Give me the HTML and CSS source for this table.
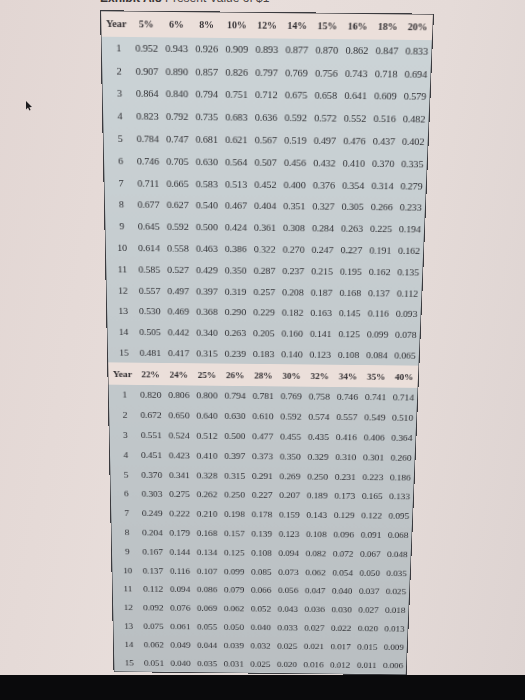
FILE: index.html
```html
<!DOCTYPE html>
<html>
<head>
<meta charset="utf-8">
<link rel="stylesheet" href="styles.css">
</head>
<body>
<div class="desk">
  <svg class="cursor" width="7" height="10" viewBox="0 0 7 10"><path d="M0 0 L0 8.5 L2 6.6 L3.4 9.6 L4.6 9 L3.3 6.2 L6 6 Z" fill="#1c1c1e"/></svg>
  <div class="sheet">
    <div class="title"><b>Exhibit A.8</b> Present Value of $1</div>
    <table class="pv">
      <colgroup><col class="c-year"><col span="10" class="c-val"></colgroup>
      <tbody>
        <tr class="hd"><th>Year</th><th>5%</th><th>6%</th><th>8%</th><th>10%</th><th>12%</th><th>14%</th><th>15%</th><th>16%</th><th>18%</th><th>20%</th></tr>
        <tr><td>1</td><td>0.952</td><td>0.943</td><td>0.926</td><td>0.909</td><td>0.893</td><td>0.877</td><td>0.870</td><td>0.862</td><td>0.847</td><td>0.833</td></tr>
        <tr><td>2</td><td>0.907</td><td>0.890</td><td>0.857</td><td>0.826</td><td>0.797</td><td>0.769</td><td>0.756</td><td>0.743</td><td>0.718</td><td>0.694</td></tr>
        <tr><td>3</td><td>0.864</td><td>0.840</td><td>0.794</td><td>0.751</td><td>0.712</td><td>0.675</td><td>0.658</td><td>0.641</td><td>0.609</td><td>0.579</td></tr>
        <tr><td>4</td><td>0.823</td><td>0.792</td><td>0.735</td><td>0.683</td><td>0.636</td><td>0.592</td><td>0.572</td><td>0.552</td><td>0.516</td><td>0.482</td></tr>
        <tr><td>5</td><td>0.784</td><td>0.747</td><td>0.681</td><td>0.621</td><td>0.567</td><td>0.519</td><td>0.497</td><td>0.476</td><td>0.437</td><td>0.402</td></tr>
        <tr><td>6</td><td>0.746</td><td>0.705</td><td>0.630</td><td>0.564</td><td>0.507</td><td>0.456</td><td>0.432</td><td>0.410</td><td>0.370</td><td>0.335</td></tr>
        <tr><td>7</td><td>0.711</td><td>0.665</td><td>0.583</td><td>0.513</td><td>0.452</td><td>0.400</td><td>0.376</td><td>0.354</td><td>0.314</td><td>0.279</td></tr>
        <tr><td>8</td><td>0.677</td><td>0.627</td><td>0.540</td><td>0.467</td><td>0.404</td><td>0.351</td><td>0.327</td><td>0.305</td><td>0.266</td><td>0.233</td></tr>
        <tr><td>9</td><td>0.645</td><td>0.592</td><td>0.500</td><td>0.424</td><td>0.361</td><td>0.308</td><td>0.284</td><td>0.263</td><td>0.225</td><td>0.194</td></tr>
        <tr><td>10</td><td>0.614</td><td>0.558</td><td>0.463</td><td>0.386</td><td>0.322</td><td>0.270</td><td>0.247</td><td>0.227</td><td>0.191</td><td>0.162</td></tr>
        <tr><td>11</td><td>0.585</td><td>0.527</td><td>0.429</td><td>0.350</td><td>0.287</td><td>0.237</td><td>0.215</td><td>0.195</td><td>0.162</td><td>0.135</td></tr>
        <tr><td>12</td><td>0.557</td><td>0.497</td><td>0.397</td><td>0.319</td><td>0.257</td><td>0.208</td><td>0.187</td><td>0.168</td><td>0.137</td><td>0.112</td></tr>
        <tr><td>13</td><td>0.530</td><td>0.469</td><td>0.368</td><td>0.290</td><td>0.229</td><td>0.182</td><td>0.163</td><td>0.145</td><td>0.116</td><td>0.093</td></tr>
        <tr><td>14</td><td>0.505</td><td>0.442</td><td>0.340</td><td>0.263</td><td>0.205</td><td>0.160</td><td>0.141</td><td>0.125</td><td>0.099</td><td>0.078</td></tr>
        <tr><td>15</td><td>0.481</td><td>0.417</td><td>0.315</td><td>0.239</td><td>0.183</td><td>0.140</td><td>0.123</td><td>0.108</td><td>0.084</td><td>0.065</td></tr>
        <tr class="hd"><th>Year</th><th>22%</th><th>24%</th><th>25%</th><th>26%</th><th>28%</th><th>30%</th><th>32%</th><th>34%</th><th>35%</th><th>40%</th></tr>
        <tr><td>1</td><td>0.820</td><td>0.806</td><td>0.800</td><td>0.794</td><td>0.781</td><td>0.769</td><td>0.758</td><td>0.746</td><td>0.741</td><td>0.714</td></tr>
        <tr><td>2</td><td>0.672</td><td>0.650</td><td>0.640</td><td>0.630</td><td>0.610</td><td>0.592</td><td>0.574</td><td>0.557</td><td>0.549</td><td>0.510</td></tr>
        <tr><td>3</td><td>0.551</td><td>0.524</td><td>0.512</td><td>0.500</td><td>0.477</td><td>0.455</td><td>0.435</td><td>0.416</td><td>0.406</td><td>0.364</td></tr>
        <tr><td>4</td><td>0.451</td><td>0.423</td><td>0.410</td><td>0.397</td><td>0.373</td><td>0.350</td><td>0.329</td><td>0.310</td><td>0.301</td><td>0.260</td></tr>
        <tr><td>5</td><td>0.370</td><td>0.341</td><td>0.328</td><td>0.315</td><td>0.291</td><td>0.269</td><td>0.250</td><td>0.231</td><td>0.223</td><td>0.186</td></tr>
        <tr><td>6</td><td>0.303</td><td>0.275</td><td>0.262</td><td>0.250</td><td>0.227</td><td>0.207</td><td>0.189</td><td>0.173</td><td>0.165</td><td>0.133</td></tr>
        <tr><td>7</td><td>0.249</td><td>0.222</td><td>0.210</td><td>0.198</td><td>0.178</td><td>0.159</td><td>0.143</td><td>0.129</td><td>0.122</td><td>0.095</td></tr>
        <tr><td>8</td><td>0.204</td><td>0.179</td><td>0.168</td><td>0.157</td><td>0.139</td><td>0.123</td><td>0.108</td><td>0.096</td><td>0.091</td><td>0.068</td></tr>
        <tr><td>9</td><td>0.167</td><td>0.144</td><td>0.134</td><td>0.125</td><td>0.108</td><td>0.094</td><td>0.082</td><td>0.072</td><td>0.067</td><td>0.048</td></tr>
        <tr><td>10</td><td>0.137</td><td>0.116</td><td>0.107</td><td>0.099</td><td>0.085</td><td>0.073</td><td>0.062</td><td>0.054</td><td>0.050</td><td>0.035</td></tr>
        <tr><td>11</td><td>0.112</td><td>0.094</td><td>0.086</td><td>0.079</td><td>0.066</td><td>0.056</td><td>0.047</td><td>0.040</td><td>0.037</td><td>0.025</td></tr>
        <tr><td>12</td><td>0.092</td><td>0.076</td><td>0.069</td><td>0.062</td><td>0.052</td><td>0.043</td><td>0.036</td><td>0.030</td><td>0.027</td><td>0.018</td></tr>
        <tr><td>13</td><td>0.075</td><td>0.061</td><td>0.055</td><td>0.050</td><td>0.040</td><td>0.033</td><td>0.027</td><td>0.022</td><td>0.020</td><td>0.013</td></tr>
        <tr><td>14</td><td>0.062</td><td>0.049</td><td>0.044</td><td>0.039</td><td>0.032</td><td>0.025</td><td>0.021</td><td>0.017</td><td>0.015</td><td>0.009</td></tr>
        <tr><td>15</td><td>0.051</td><td>0.040</td><td>0.035</td><td>0.031</td><td>0.025</td><td>0.020</td><td>0.016</td><td>0.012</td><td>0.011</td><td>0.006</td></tr>
      </tbody>
    </table>
  </div>
</div>
<div class="bezel"></div>
</body>
</html>
```
FILE: styles.css
```css
html, body {
  margin: 0;
  padding: 0;
}
body {
  width: 525px;
  height: 700px;
  overflow: hidden;
  background: #0b0b0d;
  display: flex;
  flex-direction: column;
}
.desk {
  position: relative;
  height: 675px;
  flex: none;
  overflow: hidden;
  background: linear-gradient(100deg, #e2d6d3 0%, #e8dedb 40%, #e5dbd8 70%, #ddd3d1 100%);
}
.bezel {
  flex: 1;
  background: #0a0a0c;
}
.cursor {
  position: absolute;
  left: 26px;
  top: 101px;
}
.sheet {
  padding-left: 100px;
  display: flex;
  flex-direction: column;
}
.title {
  font-family: "Liberation Sans", Arial, sans-serif;
  font-size: 12px;
  line-height: 14px;
  color: #4a4444;
  margin-top: -9px;
  height: 14px;
  margin-bottom: 7px;
  white-space: nowrap;
}
.title b {
  font-weight: bold;
  color: #3a3434;
}
.pv {
  width: 333px;
  table-layout: fixed;
  border-collapse: collapse;
  border: 1.5px solid #3a3a3e;
  font-family: "Liberation Serif", "Times New Roman", serif;
  font-size: 10.4px;
  color: #2e2e32;
  background: linear-gradient(180deg, #ccd4d7 0%, #c3cacd 45%, #b9bec1 100%);
  transform-origin: 50% 0;
  transform: perspective(1000px) rotateZ(0.6deg) rotateX(-10.5deg);
}
.c-year { width: 30.5px; }
.c-val { width: 30.25px; }
.pv td, .pv th {
  padding: 0;
  text-align: center;
  white-space: nowrap;
  letter-spacing: -0.1px;
}
.pv td {
  height: 23.8px;
}
.pv td:first-child {
  padding-left: 4px;
}
.pv tr.hd th {
  height: 25.5px;
  background: #ebdfda;
  font-weight: bold;
  font-size: 10px;
  color: #333033;
}
.pv tr.hd th:first-child {
  font-size: 10.5px;
}
```
